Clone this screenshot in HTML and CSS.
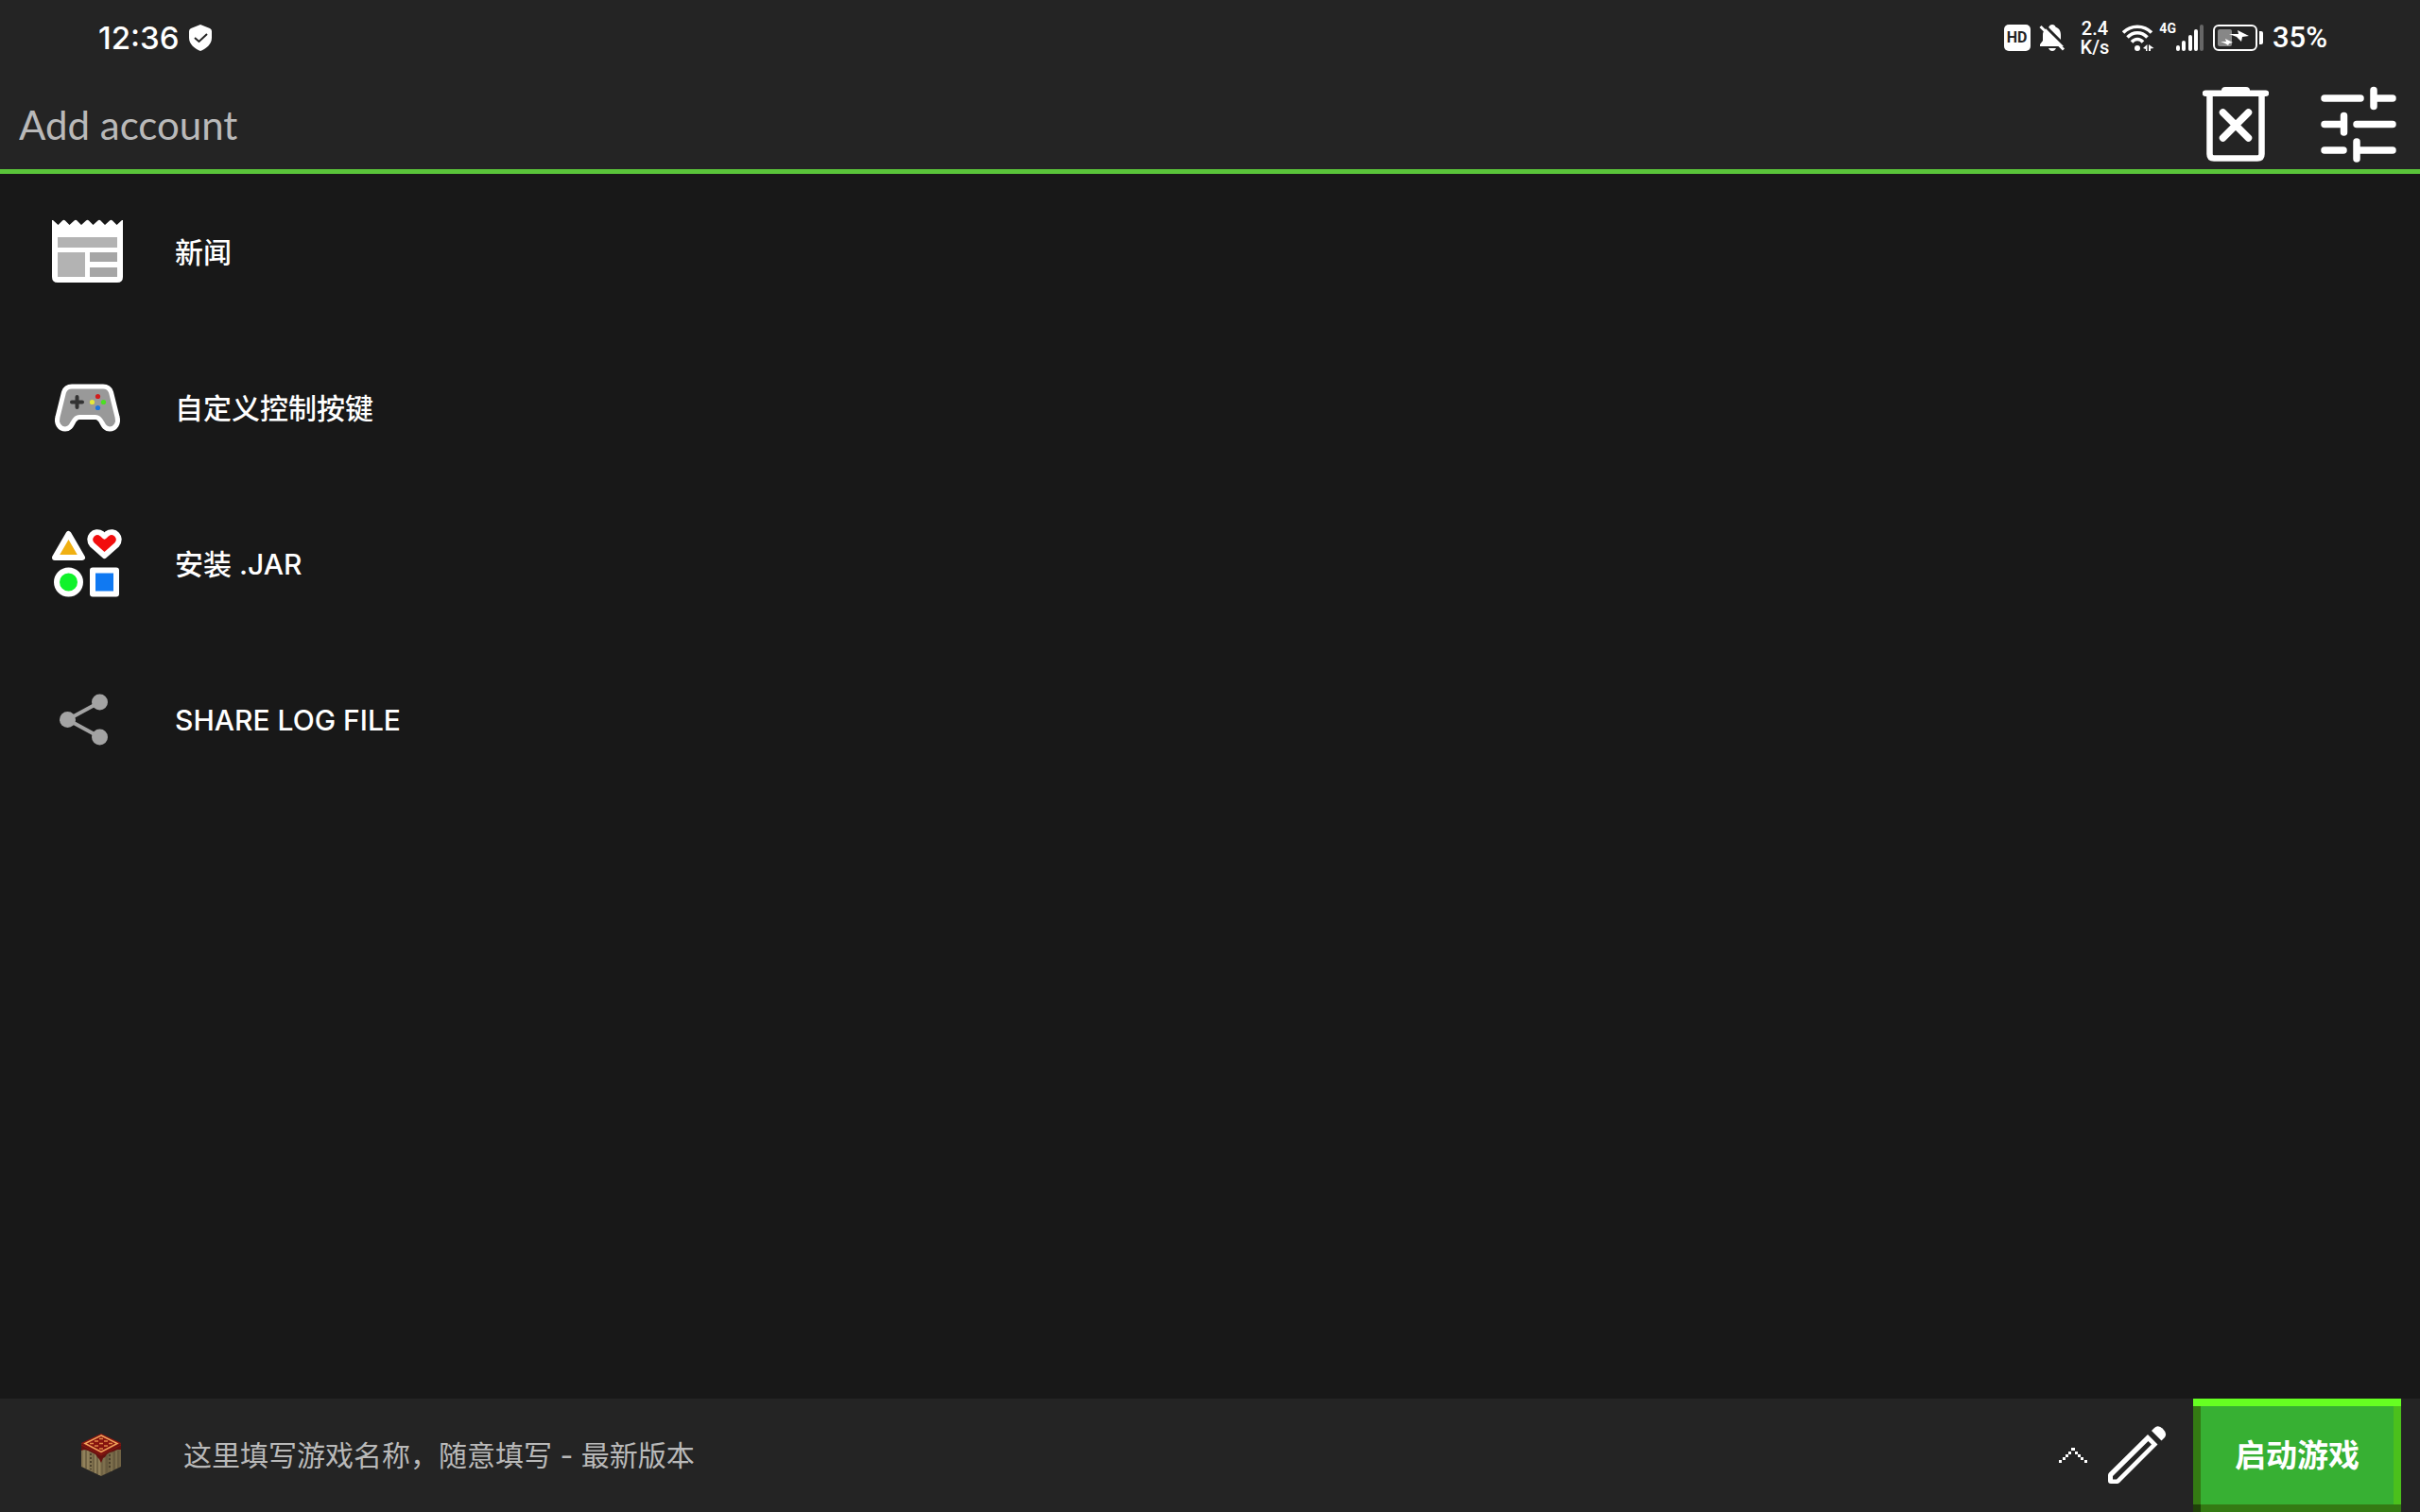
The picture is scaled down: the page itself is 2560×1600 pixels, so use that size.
FILE: index.html
```html
<!DOCTYPE html>
<html lang="zh-CN">
<head>
  <meta charset="UTF-8">
  <meta name="viewport" content="width=device-width, initial-scale=1.0">
  <title>Launcher</title>
  <link rel="stylesheet" href="styles.css">
</head>
<body>
  <div class="status-bar">
    <div class="status-left">
      <span class="clock">12:36</span>
      <svg class="shield" width="24" height="28" viewBox="0 0 24 28">
        <path d="M12 0 L22 4 Q24 5 24 7 V14 C24 21 18 25.500 12 28 C6 25.500 0 21 0 14 V7 Q0 5 2 4 Z" fill="#fff"/>
        <path d="M6 14 L10.500 18 L19 10" fill="none" stroke="#242424" stroke-width="2"/>
      </svg>
    </div>
    <div class="status-right">
      <span class="hd">HD</span>
      <svg class="bell" width="28" height="28" viewBox="0 0 28 28">
        <path d="M14 0 C16 0 17 1 17.500 2.500 C21.500 4 23 7 23 11 V17 L26 21 V23 H1 V21 L4 17 V11 C4 7 6.500 4 10.500 2.500 C11 1 12 0 14 0 Z" fill="#fff"/>
        <path d="M10 25 H18 C17 27 16 28 14 28 C12 28 11 27 10 25 Z" fill="#fff"/>
        <path d="M4 -1 L30 25" stroke="#242424" stroke-width="3"/>
        <path d="M1.500 2 L26 26.500" stroke="#fff" stroke-width="3"/>
      </svg>
      <span class="speed">2.4<br>K/s</span>
      <svg class="wifi" width="34" height="28" viewBox="0 0 34 28">
        <g fill="none" stroke="#fff" stroke-width="3.500">
          <path d="M1 8.500 C9 0 23 0 31 8.500"/>
          <path d="M5.500 13.500 C11.500 7 20.500 7 26.500 13.500"/>
          <path d="M10 18.500 C13.500 14.500 18.500 14.500 22 18.500"/>
        </g>
        <circle cx="16" cy="25" r="3" fill="#fff"/>
        <path d="M22 25 L26.500 21 V28 H25 V26 Z M28 21 L33.500 25 L30 25.500 V28 H28 Z" fill="#fff"/>
      </svg>
      <span class="network">4G</span>
      <svg class="signal" width="30" height="28" viewBox="0 0 30 28">
        <g fill="#fff">
          <rect x="0" y="22" width="4" height="6" rx="2"/>
          <rect x="6" y="17" width="4" height="11" rx="2"/>
          <rect x="13" y="11" width="4" height="17" rx="2"/>
          <rect x="19" y="5" width="4" height="23" rx="2"/>
        </g>
        <rect x="25" y="0" width="4" height="28" rx="2" fill="#666"/>
      </svg>
      <svg class="battery" width="54" height="28" viewBox="0 0 54 28">
        <rect x="1" y="1" width="45" height="26" rx="5" fill="none" stroke="#fff" stroke-width="2"/>
        <rect x="5" y="5" width="15" height="18" rx="2" fill="#878787"/>
        <path d="M49 7 H51 Q53 7 53 9 V19 Q53 21 51 21 H49 Z" fill="#fff"/>
        <path d="M17 10 L27 10 L26 6 L38 12 L31 13 L30 18 L25 13 Z M8 18 L14 18 L13 15 L21 19 L17 20 L16 22 L13 20 Z" fill="#fff"/>
      </svg>
      <span class="percent">35%</span>
    </div>
  </div>

  <header class="account-bar">
    <select class="account" aria-label="Account">
      <option>Add account</option>
    </select>
    <button class="icon-btn" aria-label="Delete account">
      <svg width="70" height="80" viewBox="0 0 70 80">
        <path d="M24 0 H46 Q50 0 50 3.500 H67 A3.200 3.200 0 0 1 67 10 H3 A3.200 3.200 0 0 1 3 3.500 H20 Q20 0 24 0 Z" fill="#fff"/>
        <path d="M7.500 8 V71 Q7.500 75.500 12 75.500 H58 Q62.500 75.500 62.500 71 V8" fill="none" stroke="#fff" stroke-width="6.500"/>
        <path d="M21.500 27 L48.500 54 M48.500 27 L21.500 54" stroke="#fff" stroke-width="7.500" stroke-linecap="round"/>
      </svg>
    </button>
    <button class="icon-btn" aria-label="Settings">
      <svg width="80" height="82" viewBox="0 0 80 82">
        <path d="M4 13 H42 M56 4.500 V21.500 M56 13 H76 M4 40.500 H24 M24.500 31.500 V49 M38 40.500 H76 M4 68 H24 M38 59 V77 M38 68 H76" fill="none" stroke="#fff" stroke-width="7.500" stroke-linecap="round"/>
      </svg>
    </button>
  </header>

  <main class="menu">
    <button class="menu-item">
      <svg class="menu-icon" width="76" height="76" viewBox="0 0 76 76">
        <path d="M0 4 L1 4 L6.500 9 L11 4.500 Q12.500 3 14 4.500 L18.500 9 L23.500 4.500 Q25 3 26.500 4.500 L31 9 L36 4.500 Q37.500 3 39 4.500 L43.500 9 L48.500 4.500 Q50 3 51.500 4.500 L56 9 L61 4.500 Q62.500 3 64 4.500 L68.500 9 L74 4 L75 4 V64 Q75 70 69 70 H6 Q0 70 0 64 Z" fill="#fff"/>
        <path d="M6 22 H69 V33 H6 Z M6 38 H35 V64 H6 Z" fill="#b3b3b3"/>
        <path d="M40 38 H69 V48 H40 Z M40 54 H69 V64 H40 Z" fill="#a6a6a6"/>
      </svg>
      <span>新闻</span>
    </button>
    <button class="menu-item">
      <svg class="menu-icon" width="76" height="76" viewBox="0 0 76 76">
        <path d="M21 15 H54 Q60.500 15 62.500 21 L69 47 C71 54 67 60 61 60 C52 60 54 47.500 46 47.500 H29 C21 47.500 23 60 14 60 C8 60 4 54 6 47 L12.500 21 Q14.500 15 21 15 Z" fill="#999" stroke="#fff" stroke-width="5"/>
        <path d="M21 31.500 H32 M26.500 26 V37" stroke="#333" stroke-width="4" stroke-linecap="round"/>
        <circle cx="48.500" cy="25.500" r="2.600" fill="#d21c1c"/>
        <circle cx="42.500" cy="31.500" r="2.600" fill="#e6e83a"/>
        <circle cx="54.500" cy="31.500" r="2.600" fill="#4be022"/>
        <circle cx="48.500" cy="37.500" r="2.600" fill="#1c74dc"/>
      </svg>
      <span>自定义控制按键</span>
    </button>
    <button class="menu-item">
      <svg class="menu-icon" width="76" height="76" viewBox="0 0 76 76">
        <g stroke="#fff" stroke-width="6" stroke-linejoin="round">
          <path d="M17.500 6 L32 31 H3 Z" fill="#f0b012"/>
          <path d="M55.500 29 L42.500 17.500 C36 10 45 0 53 6 L55.500 8.500 L58 6 C66 0 75 10 68.500 17.500 Z" fill="#f20d0d"/>
          <circle cx="17.500" cy="57" r="12.500" fill="#10f22a"/>
          <rect x="43" y="44.500" width="25" height="25" fill="#1079f2"/>
        </g>
      </svg>
      <span>安装 .JAR</span>
    </button>
    <button class="menu-item">
      <svg class="menu-icon" width="76" height="76" viewBox="0 0 76 76">
        <path d="M50.500 19 L16.500 37.500 L50.500 56" fill="none" stroke="#a3a3a3" stroke-width="4"/>
        <g fill="#a3a3a3">
          <circle cx="16.500" cy="37.500" r="8.500"/>
          <circle cx="50.500" cy="19" r="8.500"/>
          <circle cx="50.500" cy="56" r="8.500"/>
        </g>
      </svg>
      <span>SHARE LOG FILE</span>
    </button>
  </main>

  <footer class="version-bar">
    <svg class="block-icon" width="42" height="46" viewBox="0 0 42 46">
      <path d="M0 10 L21 21 V45 L0 35 Z" fill="#82734f"/>
      <path d="M42 10 L21 21 V45 L42 35 Z" fill="#716344"/>
      <path d="M3 18 V36 M7 18 V38 M15 22 V42 M19 25 V44" stroke="#a09068" stroke-width="1"/>
      <path d="M5 18 V37 M13 22 V41 M17 24 V43 M27 23 V42 M35 19 V38 M39 18 V36" stroke="#61543a" stroke-width="1"/>
      <path d="M24 25 V43 M32 21 V40 M37 18 V37" stroke="#8b7c57" stroke-width="1"/>
      <path d="M10 21 V38 M30 22 V38" stroke="#4c412c" stroke-width="2" stroke-dasharray="2 2"/>
      <path d="M0 10 L21 21 L42 10 V17 L38 17 L34 19 L30 20 L27 22 L25 25 L23 26 L21 31 L19 27 L17 25 L15 22 L11 20 L7 18 L3 17 L0 18 Z" fill="#65110f"/>
      <path d="M21 0 L42 10 L21 22 L0 10 Z" fill="#8c1712"/>
      <path d="M21 2 L38 10.500 L21 19.500 L4 10.500 Z" fill="#86140f" stroke="#f0a55c" stroke-width="1.500"/>
      <path d="M19 5.500 H23 M14 8 H18 M24 8 H28 M9 10.500 H13 M19 10.500 H23 M29 10.500 H33 M14 13 H18 M24 13 H28 M19 16 H23" stroke="#df8545" stroke-width="1.500"/>
      <path d="M0 12 L21 23 L42 12" fill="none" stroke="#8c1712" stroke-width="1"/>
    </svg>
    <select class="version" aria-label="Version">
      <option>这里填写游戏名称，随意填写 - 最新版本</option>
    </select>
    <svg class="chevron" width="30" height="16" viewBox="0 0 30 16" shape-rendering="crispEdges">
      <path d="M0 13 h3 v3 h-3 Z M4 10 h3 v3 h-3 Z M7 7 h3 v3 h-3 Z M10 4 h3 v3 h-3 Z M13 0 h4 v3 h-4 Z M17 4 h3 v3 h-3 Z M20 7 h3 v3 h-3 Z M23 10 h3 v3 h-3 Z M27 13 h3 v3 h-3 Z" fill="#fff"/>
    </svg>
    <button class="edit-btn" aria-label="Edit profile">
      <svg width="62" height="62" viewBox="0 0 62 62">
        <path fill-rule="evenodd" d="M42 9 L52.500 19.500 L12 60 Q11 61 9.500 61 H3 Q0 61 0 58 V52 Q0 50.500 1 49.500 Z M42.500 16 L5 53 V56.500 H9 L46 19.500 Z" fill="#fff"/>
        <path d="M46 5 L49 2 Q53 -2 58 3 Q63 8 60 12 L56.500 15.500 Z" fill="#fff"/>
      </svg>
    </button>
    <button class="play-btn">启动游戏</button>
  </footer>
</body>
</html>
```
FILE: styles.css
```css
* {
  box-sizing: border-box;
}

body {
  margin: 0;
  min-height: 100vh;
  display: flex;
  flex-direction: column;
  background-color: #181818;
  color: #fff;
  font-family: Inter, "Noto Sans CJK SC", sans-serif;
  font-size: 30px;
  line-height: 36px;
}

button,
select {
  margin: 0;
  padding: 0;
  border: none;
  background: none;
  color: inherit;
  font: inherit;
  cursor: pointer;
}

svg {
  display: block;
  flex-shrink: 0;
}

/* Status bar */
.status-bar {
  display: flex;
  justify-content: space-between;
  align-items: center;
  height: 80px;
  padding: 0 98px 0 104px;
  background-color: #242424;
}

.status-left,
.status-right {
  display: flex;
  align-items: center;
}

.clock {
  font-size: 33px;
  font-weight: 500;
}

.shield {
  margin-left: 10px;
}

.hd {
  width: 28px;
  height: 28px;
  border-radius: 5px;
  background-color: #fff;
  color: #242424;
  font-family: Roboto, sans-serif;
  font-size: 16px;
  font-weight: 700;
  line-height: 28px;
  text-align: center;
}

.bell {
  margin-left: 9px;
}

.speed {
  margin-left: 16px;
  font-family: Roboto, sans-serif;
  font-size: 20px;
  font-weight: 500;
  line-height: 20px;
  text-align: center;
}

.wifi {
  margin-left: 14px;
}

.network {
  align-self: flex-start;
  margin-left: 5px;
  font-family: Roboto, sans-serif;
  font-size: 14px;
  font-weight: 700;
  line-height: 20px;
}

.battery {
  margin-left: 9px;
}

.percent {
  margin-left: 9px;
  font-family: Roboto, sans-serif;
  font-size: 31px;
  font-weight: 500;
}

/* Account bar */
.account-bar {
  display: flex;
  align-items: center;
  gap: 55px;
  height: 104px;
  padding: 4px 25px 0 0;
  background-color: #242424;
  border-bottom: 5px solid #5ac43a;
}

.account {
  flex: 1;
  height: 95px;
  padding-left: 20px;
  appearance: none;
  color: #b9b9b9;
  font-family: Lato, sans-serif;
  font-size: 42px;
}

/* Menu */
.menu {
  flex: 1;
  display: flex;
  flex-direction: column;
  align-items: flex-start;
}

.menu-item {
  display: flex;
  align-items: center;
  gap: 54px;
  height: 165px;
  padding: 0 55px;
  font-weight: 500;
}

/* Version bar */
.version-bar {
  display: flex;
  align-items: center;
  height: 120px;
  padding-right: 20px;
  background-color: #242424;
}

.block-icon {
  margin-left: 86px;
}

.version {
  flex: 1;
  height: 120px;
  padding-left: 66px;
  appearance: none;
  color: #b9b9b9;
}

.edit-btn {
  margin: 0 28px 0 22px;
}

.play-btn {
  width: 220px;
  height: 120px;
  /* top, bottom left corner, bottom, left, right */
  background:
    linear-gradient(#66ff22, #66ff22) top / 100% 8px no-repeat,
    linear-gradient(#1f4208, #1f4208) bottom left / 8px 8px no-repeat,
    linear-gradient(#347a13, #347a13) bottom / 100% 8px no-repeat,
    linear-gradient(#347a13, #347a13) left / 8px 100% no-repeat,
    linear-gradient(#4bc01c, #4bc01c) right / 8px 100% no-repeat,
    #37b033;
  font-size: 33px;
  font-weight: 700;
}
```
